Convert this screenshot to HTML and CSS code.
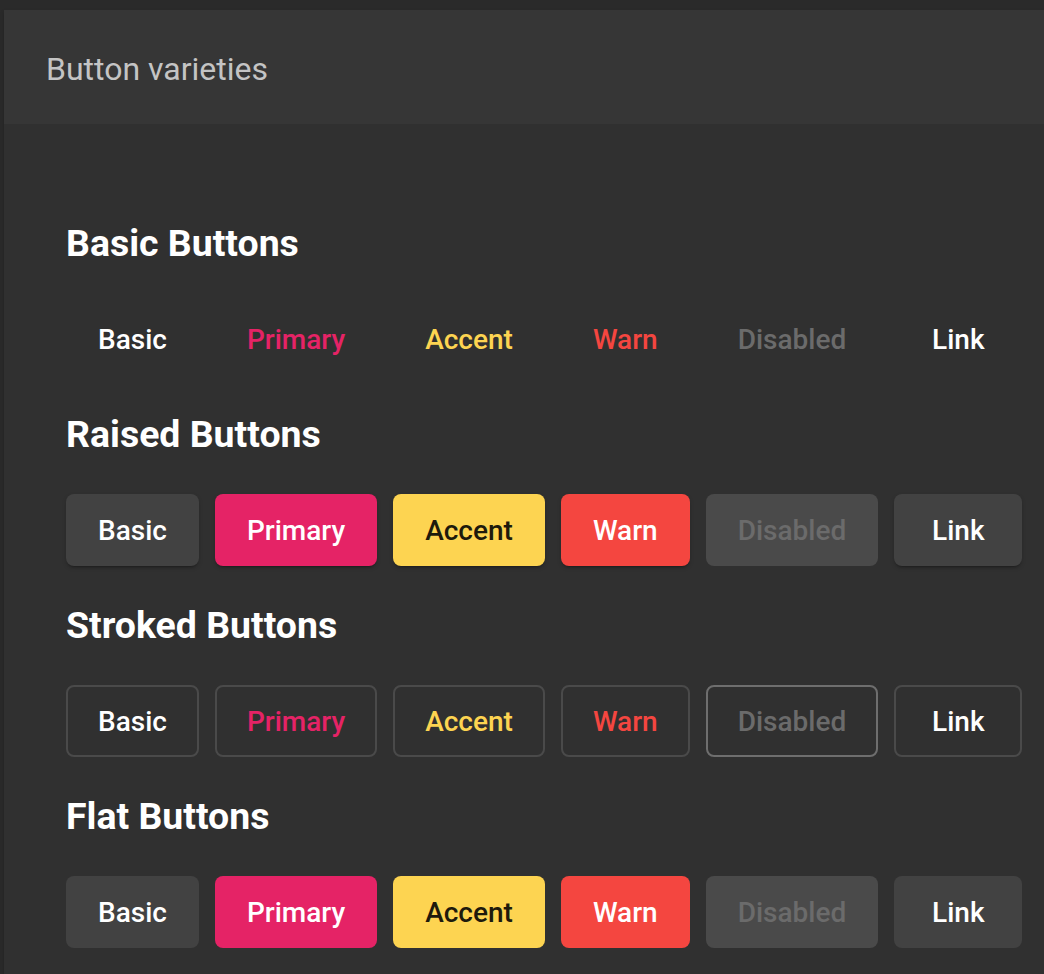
FILE: index.html
```html
<!DOCTYPE html>
<html lang="en">
<head>
  <meta charset="UTF-8">
  <meta name="viewport" content="width=device-width, initial-scale=1.0">
  <title>Button varieties</title>
  <link rel="stylesheet" href="styles.css">
</head>
<body>
  <!-- Card -->
  <div class="card">
    <div class="card-header">Button varieties</div>

    <div class="card-content">
      <h3 class="section-title">Basic Buttons</h3>
      <div class="button-row">
        <button class="btn btn-text">Basic</button>
        <button class="btn btn-text primary">Primary</button>
        <button class="btn btn-text accent">Accent</button>
        <button class="btn btn-text warn">Warn</button>
        <button class="btn btn-text" disabled>Disabled</button>
        <a href="#" class="btn btn-text">Link</a>
      </div>

      <h3 class="section-title">Raised Buttons</h3>
      <div class="button-row">
        <button class="btn btn-raised">Basic</button>
        <button class="btn btn-raised primary">Primary</button>
        <button class="btn btn-raised accent">Accent</button>
        <button class="btn btn-raised warn">Warn</button>
        <button class="btn btn-raised" disabled>Disabled</button>
        <a href="#" class="btn btn-raised">Link</a>
      </div>

      <h3 class="section-title">Stroked Buttons</h3>
      <div class="button-row">
        <button class="btn btn-stroked">Basic</button>
        <button class="btn btn-stroked primary">Primary</button>
        <button class="btn btn-stroked accent">Accent</button>
        <button class="btn btn-stroked warn">Warn</button>
        <button class="btn btn-stroked" disabled>Disabled</button>
        <a href="#" class="btn btn-stroked">Link</a>
      </div>

      <h3 class="section-title">Flat Buttons</h3>
      <div class="button-row">
        <button class="btn btn-flat">Basic</button>
        <button class="btn btn-flat primary">Primary</button>
        <button class="btn btn-flat accent">Accent</button>
        <button class="btn btn-flat warn">Warn</button>
        <button class="btn btn-flat" disabled>Disabled</button>
        <a href="#" class="btn btn-flat">Link</a>
      </div>
    </div>
  </div>
</body>
</html>
```

FILE: styles.css
```css
/* Reset and base styles */
* {
  margin: 0;
  padding: 0;
  box-sizing: border-box;
  font-family: Roboto, "Helvetica Neue", sans-serif;
}

html,
body {
  overflow: hidden;
}

body {
  background-color: #2a2a2a;
  padding: 10px 0 0 4px;
  min-height: 100vh;
  color: white;
}

/* Card */
.card {
  width: 1100px;
  min-height: 980px;
  background-color: #303030;
  box-shadow: 0 2px 4px rgba(0, 0, 0, 0.2);
}

.card-header {
  height: 114px;
  display: flex;
  align-items: center;
  padding-left: 42px;
  padding-top: 3px;
  background-color: #363636;
  color: #c4c4c4;
  font-size: 32px;
  font-weight: 400;
}

.card-content {
  padding: 99px 0 0 62px;
}

.section-title {
  font-size: 37.44px;
  line-height: 40px;
  font-weight: 700;
  color: white;
  margin-bottom: 40px;
}

.button-row {
  display: flex;
  gap: 16px;
  margin-bottom: 39px;
}

/* Buttons */
.btn {
  display: inline-flex;
  align-items: center;
  justify-content: center;
  height: 72px;
  padding: 0 32px;
  min-width: 128px;
  border: none;
  border-radius: 8px;
  background: transparent;
  color: white;
  font-size: 28px;
  font-weight: 500;
  text-decoration: none;
  cursor: pointer;
}

.btn[disabled] {
  cursor: default;
  color: #6b6b6b;
}

.btn-text.primary,
.btn-stroked.primary {
  color: #e52366;
}

.btn-text.accent,
.btn-stroked.accent {
  color: #fdd451;
}

.btn-text.warn,
.btn-stroked.warn {
  color: #f44640;
}

/* Raised and flat */
.btn-raised,
.btn-flat {
  background-color: #424242;
}

.btn-raised {
  box-shadow: 0 3px 2px -2px rgba(0, 0, 0, 0.25), 0 2px 4px rgba(0, 0, 0, 0.18);
}

.btn-raised.primary,
.btn-flat.primary {
  background-color: #e52366;
}

.btn-raised.accent,
.btn-flat.accent {
  background-color: #fdd451;
  color: #1e1a0c;
}

.btn-raised.warn,
.btn-flat.warn {
  background-color: #f44640;
}

.btn-raised[disabled],
.btn-flat[disabled] {
  background-color: #4a4a4a;
  box-shadow: none;
}

/* Stroked */
.btn-stroked {
  padding: 0 30px;
  border: 2px solid #4a4a4a;
}

.btn-stroked[disabled] {
  border-color: #6e6e6e;
}
```
